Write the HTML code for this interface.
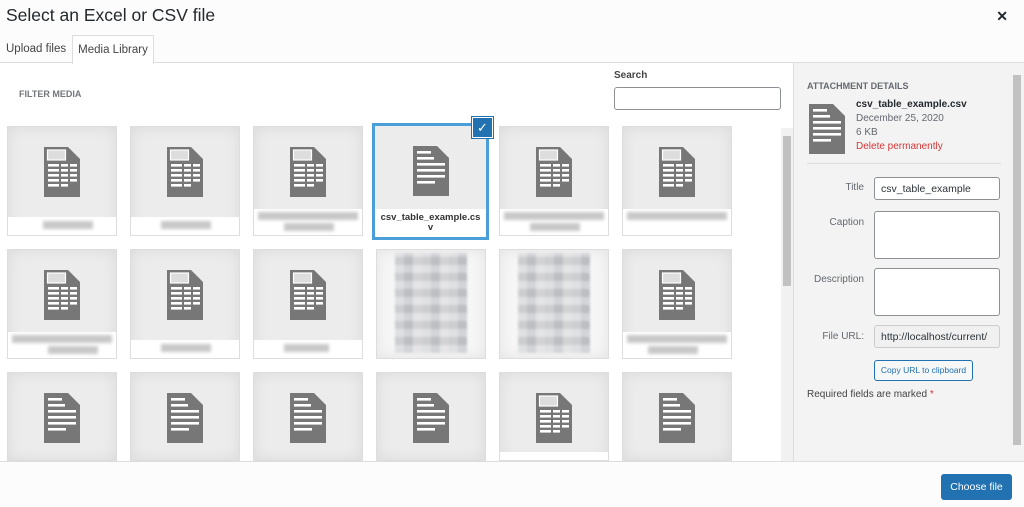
<!DOCTYPE html>
<html><head><style>
*{box-sizing:border-box;margin:0;padding:0}
body{width:1024px;height:507px;overflow:hidden;font-family:"Liberation Sans",sans-serif;background:#fff;position:relative;color:#23282d}
.h{position:absolute;left:0;top:0;width:1024px;height:63px;background:#fcfcfc;border-bottom:1px solid #ddd}
.h h1{position:absolute;left:6px;top:5px;font-size:17.5px;font-weight:normal;color:#23282d}
.x{position:absolute;right:16px;top:8px;font-size:14px;font-weight:bold}
.tab{position:absolute;top:35px;height:29px;font-size:11.5px;padding:8px 6px;color:#444;white-space:nowrap}
.t2{left:72px;width:82px;background:#fff;border:1px solid #ddd;border-bottom:none;padding:8px 0;text-align:center}
.fm{position:absolute;left:19px;top:89px;font-size:9px;font-weight:bold;color:#72777c}
.sl{position:absolute;left:614px;top:70px;font-size:10px;font-weight:bold;color:#444}
.si{position:absolute;left:614px;top:87px;width:167px;height:23px;border:1px solid #8c8f94;border-radius:3px;background:#fff}
.tile{position:absolute;width:110px;height:110px;background:#ececec;border:1px solid #ddd;box-shadow:inset 0 0 15px rgba(0,0,0,.08)}
.tile svg{position:absolute;left:36px;top:20px}
.lab{position:absolute;left:0;right:0;bottom:0;height:18px;background:#fff}
.lab i{position:absolute;height:8px;top:4px;background:#c8c8c8;filter:blur(1.5px)}
.sel{border:3px solid #4a9fd8;box-shadow:none}
.chk{position:absolute;left:472px;top:117px;width:21px;height:21px;background:#2271b1;border:1px solid #fff;box-shadow:0 0 0 1px #2271b1;color:#fff;font-size:13px;text-align:center;line-height:20px}
.mos{background:#f6f6f6}
.mos div{position:absolute;left:18px;top:3px;width:72px;height:100px;background:repeating-linear-gradient(0deg,rgba(255,255,255,.25) 0 8px,rgba(0,0,0,.04) 8px 16px),repeating-linear-gradient(90deg,#d4d6d9 0 9px,#c4c6ca 9px 18px,#dcdcdd 18px 27px);filter:blur(1px)}
.sb{position:absolute;left:781px;top:128px;width:12px;height:333px;background:#f1f1f1}
.sb div{position:absolute;left:2px;top:8px;width:8px;height:150px;background:#c1c1c1}
.side{position:absolute;left:793px;top:63px;width:231px;height:398px;background:#f3f3f3;border-left:1px solid #ddd}
.side .sc{position:absolute;right:3px;top:12px;width:8px;height:370px;background:#c1c1c1}
.ad{position:absolute;left:13px;top:18px;font-size:9px;font-weight:bold;color:#646970}
.lbl{position:absolute;font-size:10px;color:#646970;text-align:right;width:70px;left:0}
.inp{position:absolute;left:80px;width:126px;background:#fff;border:1px solid #8c8f94;border-radius:3px;font-size:10.5px;padding:5px 6px;color:#2c3338}
.foot{position:absolute;left:0;top:461px;width:1024px;height:46px;background:#fcfcfc;border-top:1px solid #ddd}
.btn{position:absolute;left:941px;top:12px;width:71px;height:26px;background:#2271b1;border-radius:3px;color:#fff;font-size:10.5px;text-align:center;line-height:26px}
</style></head><body>
<div class="h"><h1>Select an Excel or CSV file</h1><div class="x">✕</div>
<div class="tab" style="left:0">Upload files</div><div class="tab t2">Media Library</div></div>
<div class="fm">FILTER MEDIA</div>
<div class="sl">Search</div><div class="si"></div>

<svg width="0" height="0" style="position:absolute"><defs>
<g id="ss"><path d="M0 0H24L36 12V50H0Z" fill="#777"/><rect x="3.5" y="3" width="18" height="10" fill="#ddd" stroke="#fff" stroke-width="1.2"/><g fill="#fff"><rect x="4" y="17" width="11" height="2.6"/><rect x="17" y="17" width="7" height="2.6"/><rect x="26" y="17" width="7" height="2.6"/><rect x="4" y="22" width="11" height="2.6"/><rect x="17" y="22" width="7" height="2.6"/><rect x="26" y="22" width="7" height="2.6"/><rect x="4" y="27" width="11" height="2.6"/><rect x="17" y="27" width="7" height="2.6"/><rect x="26" y="27" width="7" height="2.6"/><rect x="4" y="32" width="11" height="2.6"/><rect x="17" y="32" width="7" height="2.6"/><rect x="26" y="32" width="7" height="2.6"/><rect x="4" y="37" width="11" height="2.6"/><rect x="17" y="37" width="7" height="2.6"/></g></g>
<g id="tx"><path d="M0 0H24L36 12V50H0Z" fill="#777"/><g fill="#fff"><rect x="4" y="5" width="14" height="2.6"/><rect x="4" y="11" width="17" height="2.6"/><rect x="4" y="17" width="28" height="2.6"/><rect x="4" y="23" width="28" height="2.6"/><rect x="4" y="29" width="28" height="2.6"/><rect x="4" y="35" width="18" height="2.6"/></g></g>
</defs></svg>

<div class="tile" style="left:7px;top:126px"><svg width="36" height="50"><use href="#ss"/></svg><div class="lab"><i style="left:35px;width:50px"></i></div></div>
<div class="tile" style="left:130px;top:126px"><svg width="36" height="50"><use href="#ss"/></svg><div class="lab"><i style="left:30px;width:50px"></i></div></div>
<div class="tile" style="left:253px;top:126px"><svg width="36" height="50"><use href="#ss"/></svg><div class="lab" style="height:26px"><i style="left:4px;width:100px;top:3px"></i><i style="left:30px;width:50px;top:14px"></i></div></div>
<div class="tile sel" style="left:372px;top:123px;width:117px;height:117px;background:#ececec"><svg width="36" height="50" style="left:38px;top:20px"><use href="#tx"/></svg><div class="lab" style="height:28px;font-size:9.5px;font-weight:bold;text-align:center;line-height:10px;padding-top:4px;color:#333">csv_table_example.cs<br>v</div></div>
<div class="chk">✓</div>
<div class="tile" style="left:499px;top:126px"><svg width="36" height="50"><use href="#ss"/></svg><div class="lab" style="height:26px"><i style="left:4px;width:100px;top:3px"></i><i style="left:30px;width:50px;top:14px"></i></div></div>
<div class="tile" style="left:622px;top:126px"><svg width="36" height="50"><use href="#ss"/></svg><div class="lab" style="height:26px"><i style="left:4px;width:100px;top:3px"></i></div></div>

<div class="tile" style="left:7px;top:249px"><svg width="36" height="50"><use href="#ss"/></svg><div class="lab" style="height:26px"><i style="left:4px;width:100px;top:3px"></i><i style="left:40px;width:50px;top:14px"></i></div></div>
<div class="tile" style="left:130px;top:249px"><svg width="36" height="50"><use href="#ss"/></svg><div class="lab"><i style="left:30px;width:50px"></i></div></div>
<div class="tile" style="left:253px;top:249px"><svg width="36" height="50"><use href="#ss"/></svg><div class="lab"><i style="left:30px;width:45px"></i></div></div>
<div class="tile mos" style="left:376px;top:249px"><div></div></div>
<div class="tile mos" style="left:499px;top:249px"><div></div></div>
<div class="tile" style="left:622px;top:249px"><svg width="36" height="50"><use href="#ss"/></svg><div class="lab" style="height:26px"><i style="left:4px;width:100px;top:3px"></i><i style="left:25px;width:50px;top:14px"></i></div></div>

<div class="tile" style="left:7px;top:372px;height:89px"><svg width="36" height="50"><use href="#tx"/></svg></div>
<div class="tile" style="left:130px;top:372px;height:89px"><svg width="36" height="50"><use href="#tx"/></svg></div>
<div class="tile" style="left:253px;top:372px;height:89px"><svg width="36" height="50"><use href="#tx"/></svg></div>
<div class="tile" style="left:376px;top:372px;height:89px"><svg width="36" height="50"><use href="#tx"/></svg></div>
<div class="tile" style="left:499px;top:372px;height:89px"><svg width="36" height="50"><use href="#ss"/></svg><div class="lab" style="height:8px;bottom:0"></div></div>
<div class="tile" style="left:622px;top:372px;height:89px"><svg width="36" height="50"><use href="#tx"/></svg></div>

<div class="sb"><div></div></div>
<div class="side"><div class="sc"></div>
<div class="ad">ATTACHMENT DETAILS</div>
<svg width="36" height="50" style="position:absolute;left:15px;top:41px"><use href="#tx"/></svg>
<div style="position:absolute;left:62px;top:35px;font-size:10px;line-height:14px;color:#646970"><b style="color:#23282d">csv_table_example.csv</b><br>December 25, 2020<br>6 KB<br><span style="color:#d63638">Delete permanently</span></div>
<div style="position:absolute;left:13px;top:100px;width:194px;border-top:1px solid #ddd"></div>
<div class="lbl" style="top:119px">Title</div><div class="inp" style="top:114px;height:23px">csv_table_example</div>
<div class="lbl" style="top:154px">Caption</div><div class="inp" style="top:148px;height:48px"></div>
<div class="lbl" style="top:211px">Description</div><div class="inp" style="top:205px;height:48px"></div>
<div class="lbl" style="top:268px">File URL:</div><div class="inp" style="top:262px;height:23px;background:#f0f0f1;border-color:#ccc;overflow:hidden;white-space:nowrap">http://localhost/current/</div>
<div style="position:absolute;left:80px;top:297px;width:99px;height:21px;border:1px solid #2271b1;border-radius:3px;background:#f6f7f7;color:#2271b1;font-size:8.5px;text-align:center;line-height:19px">Copy URL to clipboard</div>
<div style="position:absolute;left:13px;top:326px;font-size:10px;color:#444">Required fields are marked <span style="color:#d63638">*</span></div>
</div>
<div class="foot"><div class="btn">Choose file</div></div>
</body></html>
